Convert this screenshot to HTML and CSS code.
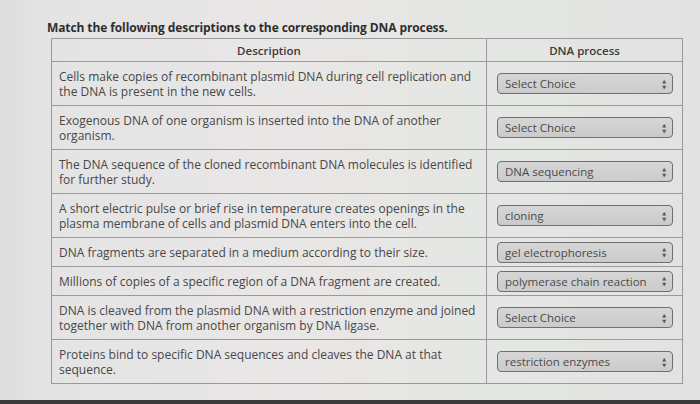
FILE: index.html
```html
<!DOCTYPE html>
<html>
<head>
<meta charset="utf-8">
<link rel="stylesheet" href="styles.css">
</head>
<body>
<div class="page">
  <h1 class="title">Match the following descriptions to the corresponding DNA process.</h1>
  <table class="match">
    <thead>
      <tr><th class="desc-h">Description</th><th class="proc-h">DNA process</th></tr>
    </thead>
    <tbody>
      <tr><td class="desc">Cells make copies of recombinant plasmid DNA during cell replication and the DNA is present in the new cells.</td><td class="proc"><div class="sel"><span>Select Choice</span><span class="arr"><span>▲</span><span>▼</span></span></div></td></tr>
      <tr><td class="desc">Exogenous DNA of one organism is inserted into the DNA of another organism.</td><td class="proc"><div class="sel"><span>Select Choice</span><span class="arr"><span>▲</span><span>▼</span></span></div></td></tr>
      <tr><td class="desc">The DNA sequence of the cloned recombinant DNA molecules is identified for further study.</td><td class="proc"><div class="sel"><span>DNA sequencing</span><span class="arr"><span>▲</span><span>▼</span></span></div></td></tr>
      <tr><td class="desc">A short electric pulse or brief rise in temperature creates openings in the plasma membrane of cells and plasmid DNA enters into the cell.</td><td class="proc"><div class="sel"><span>cloning</span><span class="arr"><span>▲</span><span>▼</span></span></div></td></tr>
      <tr><td class="desc">DNA fragments are separated in a medium according to their size.</td><td class="proc"><div class="sel"><span>gel electrophoresis</span><span class="arr"><span>▲</span><span>▼</span></span></div></td></tr>
      <tr><td class="desc">Millions of copies of a specific region of a DNA fragment are created.</td><td class="proc"><div class="sel"><span>polymerase chain reaction</span><span class="arr"><span>▲</span><span>▼</span></span></div></td></tr>
      <tr><td class="desc">DNA is cleaved from the plasmid DNA with a restriction enzyme and joined together with DNA from another organism by DNA ligase.</td><td class="proc"><div class="sel"><span>Select Choice</span><span class="arr"><span>▲</span><span>▼</span></span></div></td></tr>
      <tr><td class="desc">Proteins bind to specific DNA sequences and cleaves the DNA at that sequence.</td><td class="proc"><div class="sel"><span>restriction enzymes</span><span class="arr"><span>▲</span><span>▼</span></span></div></td></tr>
    </tbody>
  </table>
</div>
<div class="bottom"></div>
</body>
</html>
```
FILE: styles.css
```css
html, body { margin: 0; padding: 0; }
body {
  width: 700px;
  height: 404px;
  overflow: hidden;
  background: linear-gradient(90deg, #dcdcdc 0px, #e4e4e4 40px, #e9e6e6 300px, #e4e7e3 500px, #e2e2e2 700px);
  font-family: "Open Sans", "Liberation Sans", sans-serif;
  color: #444;
  display: flex;
  flex-direction: column;
}
.page {
  flex: 1;
  padding: 20px 0 0 47px;
}
.title {
  margin: 0 0 2px 0;
  font-size: 12px;
  font-weight: 700;
  color: #2e2e2e;
  line-height: 16px;
  letter-spacing: -0.1px;
}
.match {
  border-collapse: collapse;
  width: 632px;
  margin-left: 4px;
  font-size: 12px;
  line-height: 15px;
}
.match th, .match td {
  border: 1px solid #9a9a9a;
}
.desc-h, .proc-h {
  font-weight: 600;
  color: #3a3a3a;
  text-align: center;
  font-size: 11.5px;
  height: 22px;
  padding: 0;
}
.desc-h { width: 434px; }
.desc {
  padding: 7px 8px 6px 7px;
  color: #474747;
  vertical-align: top;
}
.proc {
  padding: 0 9px 0 10px;
  vertical-align: middle;
}
.sel {
  display: flex;
  justify-content: space-between;
  align-items: center;
  height: 19px;
  border: 1px solid #6f6f6f;
  border-radius: 4px;
  background: linear-gradient(#d6d6d6, #cbcbcb);
  padding: 0 6px 0 7px;
  color: #4a4a4a;
  font-size: 11.5px;
}
.arr {
  display: flex;
  flex-direction: column;
  align-items: center;
  font-family: "DejaVu Sans", sans-serif;
  font-size: 5px;
  line-height: 6px;
  color: #555;
}
.bottom {
  height: 4px;
  background: #3a3a3a;
}
```
